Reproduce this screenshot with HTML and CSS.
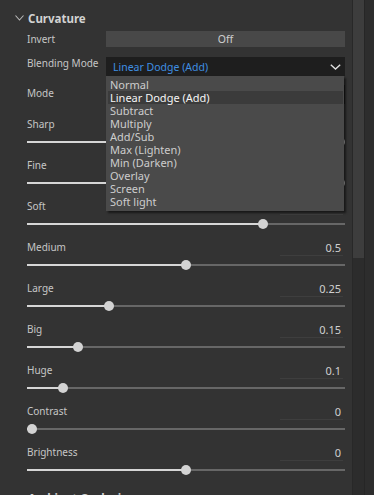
FILE: index.html
```html
<!DOCTYPE html>
<html>
<head>
<meta charset="utf-8">
<link rel="stylesheet" href="styles.css">
</head>
<body>
<div class="app">
  <div class="panel">
    <div class="section-header">
      <svg class="chev" width="9" height="6" viewBox="0 0 9 6"><path d="M0.5 0.5 L4.5 5 L8.5 0.5" fill="none" stroke="#b8b8b8" stroke-width="1.1"/></svg>
      <span>Curvature</span>
    </div>

    <div class="prop prop-invert">
      <span class="label">Invert</span>
      <div class="button">Off</div>
    </div>

    <div class="prop prop-blend">
      <span class="label">Blending Mode</span>
      <div class="select-wrap">
        <div class="select">
          <span class="select-text">Linear Dodge (Add)</span>
          <svg width="11" height="6" viewBox="0 0 11 6"><path d="M0.8 0.8 L5.5 5 L10.2 0.8" fill="none" stroke="#e0e0e0" stroke-width="1.4"/></svg>
        </div>
        <ul class="dropdown">
          <li>Normal</li>
          <li class="active">Linear Dodge (Add)</li>
          <li>Subtract</li>
          <li>Multiply</li>
          <li>Add/Sub</li>
          <li>Max (Lighten)</li>
          <li>Min (Darken)</li>
          <li>Overlay</li>
          <li>Screen</li>
          <li>Soft light</li>
        </ul>
      </div>
    </div>

    <div class="prop prop-mode">
      <span class="label">Mode</span>
      <div class="select"></div>
    </div>

    <div class="sliders">
      <div class="slider-prop">
        <div class="slider-head"><span class="label">Sharp</span><span class="value">1</span></div>
        <div class="slider-row"><div class="track"><div class="fill" style="width:313px"></div><div class="thumb" style="left:308px"></div></div></div>
      </div>
      <div class="slider-prop">
        <div class="slider-head"><span class="label">Fine</span><span class="value">1</span></div>
        <div class="slider-row"><div class="track"><div class="fill" style="width:313px"></div><div class="thumb" style="left:308px"></div></div></div>
      </div>
      <div class="slider-prop">
        <div class="slider-head"><span class="label">Soft</span><span class="value">0.75</span></div>
        <div class="slider-row"><div class="track"><div class="fill" style="width:236px"></div><div class="thumb" style="left:231px"></div></div></div>
      </div>
      <div class="slider-prop">
        <div class="slider-head"><span class="label">Medium</span><span class="value">0.5</span></div>
        <div class="slider-row"><div class="track"><div class="fill" style="width:159px"></div><div class="thumb" style="left:154px"></div></div></div>
      </div>
      <div class="slider-prop">
        <div class="slider-head"><span class="label">Large</span><span class="value">0.25</span></div>
        <div class="slider-row"><div class="track"><div class="fill" style="width:82px"></div><div class="thumb" style="left:77px"></div></div></div>
      </div>
      <div class="slider-prop">
        <div class="slider-head"><span class="label">Big</span><span class="value">0.15</span></div>
        <div class="slider-row"><div class="track"><div class="fill" style="width:51px"></div><div class="thumb" style="left:46px"></div></div></div>
      </div>
      <div class="slider-prop">
        <div class="slider-head"><span class="label">Huge</span><span class="value">0.1</span></div>
        <div class="slider-row"><div class="track"><div class="fill" style="width:36px"></div><div class="thumb" style="left:31px"></div></div></div>
      </div>
      <div class="slider-prop">
        <div class="slider-head"><span class="label">Contrast</span><span class="value">0</span></div>
        <div class="slider-row"><div class="track"><div class="fill" style="width:5px"></div><div class="thumb" style="left:0px"></div></div></div>
      </div>
      <div class="slider-prop">
        <div class="slider-head"><span class="label">Brightness</span><span class="value">0</span></div>
        <div class="slider-row"><div class="track"><div class="fill" style="width:159px"></div><div class="thumb" style="left:154px"></div></div></div>
      </div>
    </div>

    <div class="section-header next">
      <svg class="chev" width="9" height="6" viewBox="0 0 9 6"><path d="M0.5 0.5 L4.5 5 L8.5 0.5" fill="none" stroke="#b8b8b8" stroke-width="1.1"/></svg>
      <span>Ambient Occlusion</span>
    </div>
  </div>
  <div class="scrollbar">
    <div class="scroll-track"><div class="scroll-thumb"></div></div>
    <div class="scroll-edge"></div>
  </div>
</div>
</body>
</html>
```

FILE: styles.css
```css
* { box-sizing: border-box; }
html, body {
  margin: 0;
  padding: 0;
  background: #333333;
  overflow: hidden;
}
body {
  font-family: "Noto Sans", "Open Sans", sans-serif;
  font-size: 11px;
  color: #c8c8c8;
}
.app {
  display: flex;
  align-items: flex-start;
  width: 374px;
  height: 495px;
  overflow: hidden;
}
.panel {
  width: 352px;
  flex: none;
  display: flex;
  flex-direction: column;
}
.panel > *,
.sliders > * {
  flex: none;
}
.section-header {
  display: flex;
  align-items: center;
  gap: 4px;
  height: 20px;
  margin-top: 8px;
  padding-left: 15px;
  font-weight: bold;
  font-size: 11.5px;
  color: #d2d2d2;
}
.section-header.next {
  margin-top: 4px;
}
.chev { flex: none; }

.prop {
  display: flex;
  margin: 0 7px 0 27px;
}
.label {
  width: 79px;
  flex: none;
  font-size: 10px;
  color: #c6c6c6;
  white-space: nowrap;
}
.prop-invert {
  margin-top: 3px;
  height: 16px;
  align-items: center;
}
.prop-invert .label { line-height: 15px; }
.button {
  flex: 1;
  height: 16px;
  line-height: 16px;
  background: #484848;
  color: #cfcfcf;
  font-size: 10.5px;
  text-align: center;
}
.prop-blend {
  margin-top: 10px;
  height: 19px;
}
.prop-blend .label { line-height: 13px; }
.select-wrap {
  flex: 1;
  position: relative;
}
.select {
  flex: 1;
  height: 19px;
  background: #1e1e1e;
  display: flex;
  align-items: center;
  justify-content: space-between;
  padding: 0 4px 0 7px;
}
.select-text {
  color: #3f8fe2;
  font-size: 10.5px;
  line-height: 19px;
  padding-top: 1px;
}
.select svg { margin-top: 1px; }
.dropdown {
  position: absolute;
  top: 19px;
  left: 0;
  width: 238px;
  height: 135px;
  margin: 0;
  padding: 2px 1px 3px 2px;
  list-style: none;
  background: #4a4a4a;
  box-shadow: 2px 2px 2px rgba(0, 0, 0, 0.55);
  z-index: 10;
}
.dropdown li {
  height: 13px;
  line-height: 13px;
  padding-left: 2px;
  color: #cdcdcd;
  white-space: nowrap;
}
.dropdown li.active {
  background: #3b3b3b;
  color: #f4f4f4;
}
.prop-mode {
  margin-top: 9px;
  height: 19px;
}
.prop-mode .label { line-height: 17px; }

.sliders {
  margin-top: 11px;
  display: flex;
  flex-direction: column;
}
.slider-prop {
  margin: 0 7px 5px 27px;
  display: flex;
  flex-direction: column;
}
.slider-head {
  height: 18px;
  display: flex;
  justify-content: space-between;
  align-items: center;
}
.slider-head .label { line-height: 17px; }
.value {
  width: 63px;
  height: 17px;
  margin-right: 2px;
  border-bottom: 1px solid #3e3e3e;
  text-align: right;
  padding-right: 2px;
  line-height: 17px;
  color: #d0d0d0;
}
.slider-row {
  height: 18px;
  display: flex;
  align-items: center;
}
.track {
  position: relative;
  width: 318px;
  height: 2px;
  background: #676767;
}
.fill {
  height: 2px;
  background: #d6d6d6;
}
.thumb {
  position: absolute;
  top: -4px;
  width: 10px;
  height: 10px;
  border-radius: 50%;
  background: #d3d3d3;
}

.scrollbar {
  width: 22px;
  flex: none;
  display: flex;
  height: 495px;
}
.scroll-track {
  width: 13px;
  background: #2c2c2c;
  border-left: 1px solid #282828;
  border-right: 1px solid #262626;
}
.scroll-thumb {
  height: 258px;
  background: #3d3d3d;
}
.scroll-edge {
  flex: 1;
  background: #2d2d2d;
}
```
